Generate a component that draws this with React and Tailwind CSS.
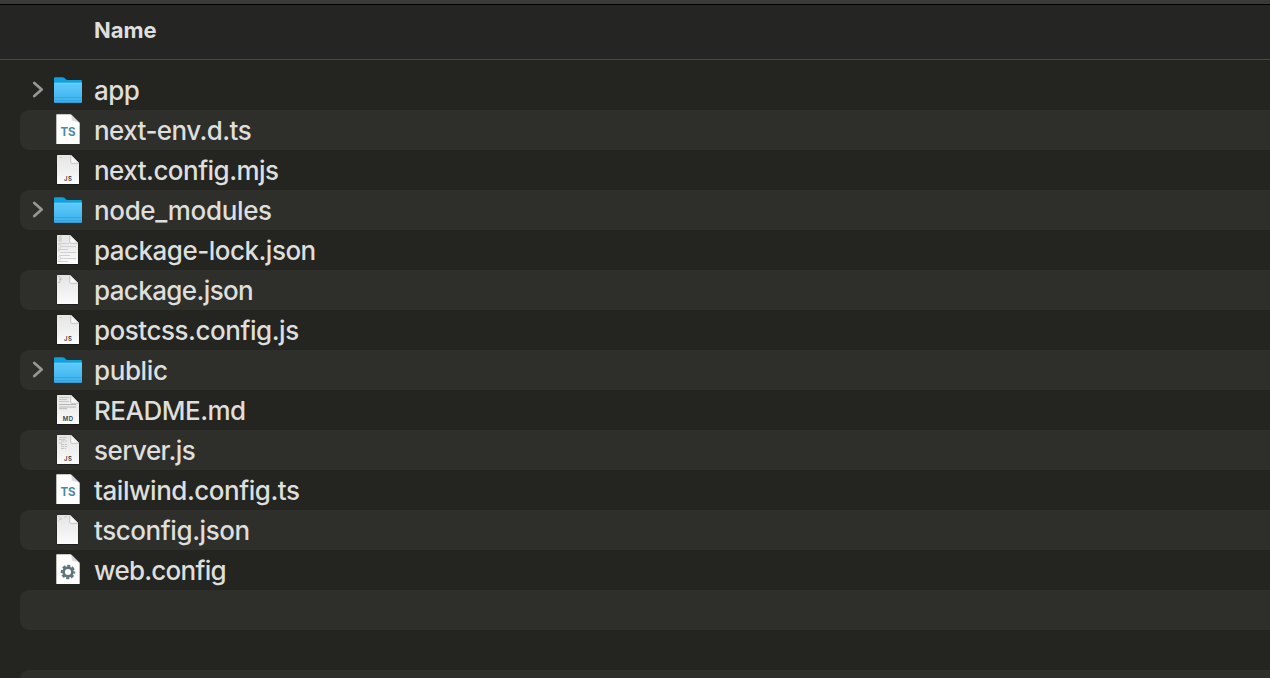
import React, { useState } from 'react';
import clsx from 'clsx';

const files = [
  { name: 'app', type: 'folder', spacing: 'tracking-[-0.6px]' },
  { name: 'next-env.d.ts', type: 'ts', spacing: 'tracking-[-0.57px]' },
  { name: 'next.config.mjs', type: 'js', spacing: 'tracking-[-0.53px]' },
  { name: 'node_modules', type: 'folder', spacing: 'tracking-[-0.35px]' },
  { name: 'package-lock.json', type: 'text', preview: 'full', spacing: 'tracking-[-0.51px]' },
  { name: 'package.json', type: 'text', preview: 'short', spacing: 'tracking-[-0.62px]' },
  { name: 'postcss.config.js', type: 'js', spacing: 'tracking-[-0.47px]' },
  { name: 'public', type: 'folder', spacing: 'tracking-[-0.4px]' },
  { name: 'README.md', type: 'md', preview: 'readme', spacing: 'tracking-[-0.5px]' },
  { name: 'server.js', type: 'js', preview: 'code', spacing: 'tracking-[-0.57px]' },
  { name: 'tailwind.config.ts', type: 'ts', spacing: 'tracking-[-0.47px]' },
  { name: 'tsconfig.json', type: 'text', preview: 'tiny', spacing: 'tracking-[-0.43px]' },
  { name: 'web.config', type: 'config', spacing: 'tracking-[-0.75px]' },
];

const emptyRows = [0, 1, 2];

const FolderIcon = () => (
  <svg className="w-9 h-10 shrink-0" viewBox="0 0 36 40">
    <defs>
      <linearGradient id="folderFront" x1="0" y1="0" x2="0" y2="1">
        <stop offset="0" stopColor="#5fcbfb" />
        <stop offset="1" stopColor="#3cb0ec" />
      </linearGradient>
    </defs>
    <rect x="4" y="10" width="28" height="23.8" rx="1.2" fill="#11120f" opacity="0.5" />
    <path
      d="M4 8.4Q4 7.2 5.2 7.2H12.6Q13.6 7.2 14.3 7.8L16.2 9.4Q16.8 9.9 17.8 9.9H30.8Q32 9.9 32 11.1V20H4Z"
      fill="#109fdf"
    />
    <path d="M4 13.7Q4 12.7 5 12.7H31Q32 12.7 32 13.7V31.8Q32 33 30.8 33H5.2Q4 33 4 31.8Z" fill="url(#folderFront)" />
    <path d="M4.5 13.3H31.5" stroke="#73d8ff" strokeWidth="0.7" />
    <path d="M4 27.5H32M4 30.5H32" stroke="#2c9dd8" strokeWidth="0.7" />
    <path d="M4.5 32.6H31.5" stroke="#238fc9" strokeWidth="0.8" />
  </svg>
);

const previews = {
  full: (
    <g>
      <path d="M8.5 7H11.5M8.5 9H12M8.5 11H11.5" stroke="#b0b0b0" strokeWidth="0.8" />
      <path d="M8 13.6H19M10 16.6H26M8 19.5H18M10 22.5H26M9 25.5H20M10 28.5H26M8 31.5H18" stroke="#c6c6c6" strokeWidth="0.8" />
      <path d="M8 15H11M8 18H11M8 21H10M8 27H11M8 30H11" stroke="#bbb" strokeWidth="0.6" />
    </g>
  ),
  short: <path d="M8 6.5H10M9 8H12M9 9.5H11.5M9 11H11M8 12.5H10" stroke="#b0b0b0" strokeWidth="0.7" />,
  tiny: <path d="M8 6.5H9.5M9 8H12M9 9.5H11.5M8 11H9.5M14 7H17" stroke="#b8b8b8" strokeWidth="0.6" />,
  readme: (
    <g fill="none" stroke="#bcbcbc" strokeWidth="0.8">
      <path d="M9 7.5H19M9 9.5H17M9 11.5H19" />
      <path d="M9 14.5H26M9 17H26M9 18.7H17" stroke="#a8a8a8" />
    </g>
  ),
  code: (
    <path
      d="M9 7.5H17M9 9.5H15M11 11H17M9 13H13M11 14.5H17M11 16.5H17M11 18.5H16"
      stroke="#b4b4b4"
      strokeWidth="0.7"
      strokeDasharray="3 0.7"
    />
  ),
};

// Generic page with a folded corner, optionally labelled with its extension
const DocumentIcon = ({ label, preview }) => {
  const right = label ? 29 : 28;
  const fold = label ? 21 : 20;
  return (
    <svg className="w-9 h-10 shrink-0" viewBox="0 0 36 40">
      <defs>
        <linearGradient id="page" x1="0" y1="0" x2="0" y2="1">
          <stop offset="0" stopColor="#e5e5e5" />
          <stop offset="0.55" stopColor="#f0f0f0" />
          <stop offset="1" stopColor="#fcfcfc" />
        </linearGradient>
        <linearGradient id="corner" x1="0" y1="1" x2="1" y2="0">
          <stop offset="0" stopColor="#ffffff" />
          <stop offset="1" stopColor="#e6e6e6" />
        </linearGradient>
      </defs>
      <rect x="6.6" y="14" width={right - 6.2} height="20.7" rx="0.8" fill="#0e0f0c" opacity="0.65" />
      <path d={`M7.5 5H${fold}L${right} 13V33.5Q${right} 34 ${right - 0.5} 34H7.5Q7 34 7 33.5V5.5Q7 5 7.5 5Z`} fill="url(#page)" />
      {preview ? previews[preview] : label && <path d="M9 7.5H12" stroke="#cccccc" strokeWidth="0.8" />}
      <path d={`M${fold} 5L${right} 13H${fold + 1}Q${fold} 13 ${fold} 12Z`} fill="url(#corner)" />
      <path d={`M${fold - 0.2} 5V12.2Q${fold - 0.2} 13.3 ${fold + 1} 13.3H${right}`} fill="none" stroke="#b4b4b4" strokeWidth="0.7" />
      {label && (
        <text
          x="18.2"
          y="31.2"
          textAnchor="middle"
          fill="#3b3b3b"
          className="font-['Inter','Liberation_Sans',sans-serif] text-[6px] font-semibold tracking-[0.4px]"
        >
          {label}
        </text>
      )}
    </svg>
  );
};

const CodeIcon = ({ children }) => (
  <svg className="w-9 h-10 shrink-0" viewBox="0 0 36 40">
    <defs>
      <linearGradient id="curl" x1="0" y1="1" x2="1" y2="0">
        <stop offset="0" stopColor="#ffffff" />
        <stop offset="0.45" stopColor="#d4d4d4" />
        <stop offset="1" stopColor="#fafafa" />
      </linearGradient>
    </defs>
    <path d="M6.8 4.3H20.3Q21 4.3 21.6 4.9L29.2 12.5Q29.7 13 29.7 13.8V33.5Q29.7 34 29.2 34H6.8Q6.3 34 6.3 33.5V4.8Q6.3 4.3 6.8 4.3Z" fill="#fefefe" />
    <path d="M20.4 4.3Q22.3 6 21.6 11.5Q27.5 10.8 29.7 13.6V13Q29.7 12.8 29.2 12.5L21.6 4.9Q21 4.3 20.4 4.3Z" fill="url(#curl)" />
    {children}
  </svg>
);

const FileIcon = ({ file }) => {
  switch (file.type) {
    case 'folder':
      return <FolderIcon />;
    case 'ts':
      return (
        <CodeIcon>
          <text
            x="18"
            y="26"
            textAnchor="middle"
            fill="#498ba7"
            className="font-['Inter','Liberation_Sans',sans-serif] text-[11.5px] font-bold"
          >
            TS
          </text>
        </CodeIcon>
      );
    case 'config':
      return (
        <CodeIcon>
          <g stroke="#60747d" fill="none">
            <circle cx="18" cy="22" r="4.4" strokeWidth="2.7" />
            <circle
              cx="18"
              cy="22"
              r="6.2"
              strokeWidth="2.1"
              strokeDasharray="3.1 1.77"
              strokeDashoffset="1.55"
            />
          </g>
        </CodeIcon>
      );
    default:
      return <DocumentIcon label={file.type === 'text' ? '' : file.type.toUpperCase()} preview={file.preview} />;
  }
};

const FileRow = ({ file, striped, onToggle }) => (
  <div className={clsx('ml-5 h-10 flex items-center rounded-l-[9px] shrink-0', striped && 'bg-[#2e2f2b]')} onClick={onToggle}>
    {file && (
      <>
        <div className="w-[30px] h-10 shrink-0">
          {file.type === 'folder' && (
            <svg className="w-[30px] h-10" viewBox="0 0 30 40" fill="none">
              <path
                d="M14.3 13L21.7 19.5L14.3 26"
                stroke="#969693"
                strokeWidth="2.8"
                strokeLinecap="round"
                strokeLinejoin="round"
              />
            </svg>
          )}
        </div>
        <FileIcon file={file} />
        <span className={clsx('pl-2 pt-[2px] text-[26px] leading-[38px] font-[450] text-[#dededc] whitespace-nowrap', file.spacing)}>
          {file.name}
        </span>
      </>
    )}
  </div>
);

const App = () => {
  const [selected, setSelected] = useState(null);

  return (
    <div
      className="h-[678px] w-full overflow-hidden flex flex-col bg-[#242520] font-['Inter','Liberation_Sans',sans-serif] cursor-default select-none"
      data-selected={selected}
    >
      <div className="h-[5px] shrink-0 bg-[#3a3b38] border-b border-black" />

      {/* Column header */}
      <div className="h-[55px] shrink-0 flex items-center pl-[94px] bg-[#252523] border-b border-[#4a4b47]">
        <span className="pb-[5px] text-[22px] leading-7 font-bold text-[#dededc]">Name</span>
      </div>

      {/* File list */}
      <div className="pt-[10px] flex flex-col">
        {files.map((file, index) => (
          <FileRow key={file.name} file={file} striped={index % 2 === 1} onToggle={() => setSelected(file.name)} />
        ))}
        {emptyRows.map((row) => (
          <FileRow key={row} striped={(files.length + row) % 2 === 1} />
        ))}
      </div>
    </div>
  );
};

export default App;
